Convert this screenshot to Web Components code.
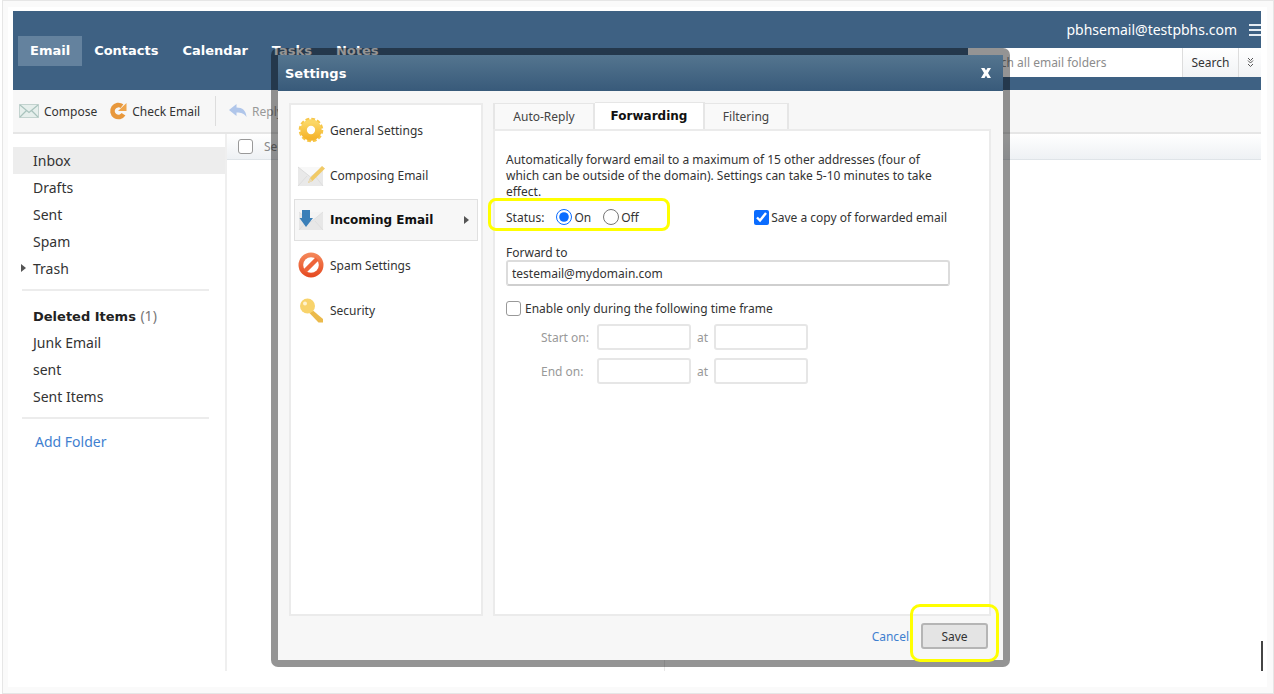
<!DOCTYPE html>
<html lang="en">
<head>
<meta charset="utf-8">
<title>Email - Settings</title>
<style>
html,body{margin:0;height:100%}
body{--bold-font:"DejaVu Sans",Verdana,sans-serif;font-family:"Noto Sans","Open Sans",sans-serif;font-size:12px;color:#333;background:#fff}
</style>
</head>
<body>
<mail-app></mail-app>
<script>
const define = (name, markup, setup) => {
  const template = document.createElement('template');
  template.innerHTML = markup;
  customElements.define(name, class extends HTMLElement {
    constructor() {
      super();
      this.attachShadow({ mode: 'open' }).appendChild(template.content.cloneNode(true));
    }
    connectedCallback() { if (setup) setup(this, this.shadowRoot); }
  });
};

/* Line and colour icons */
const ICONS = {
  compose: `<svg viewBox="0 0 20 16" width="20" height="16"><rect x=".5" y="1.5" width="19" height="13" fill="#e6efec" stroke="#c3d3cf"/><path d="M1 2l9 7.500L19 2M1 14l6.500-6.500M19 14l-6.500-6.500" fill="none" stroke="#a9c3bd" stroke-width="1.200"/></svg>`,
  refresh: `<svg viewBox="0 0 18 18" width="18" height="18"><path d="M14.500 12.300A6 6 0 1 1 13 4.200" fill="none" stroke="#e8983c" stroke-width="4.600"/><path d="M17.500 1v8h-8.500z" fill="#efa54c"/></svg>`,
  reply: `<svg viewBox="0 0 18 14" width="18" height="14"><path d="M0 6L7.500 0v3.500c6 0 9.500 3 10 9.500-2.500-3.500-5-4.500-10-4.500V12z" fill="#b0c6ea"/></svg>`,
  gear: `<svg viewBox="0 0 26 26" width="26" height="26"><defs><linearGradient id="g" x2="0" y2="1"><stop stop-color="#fbd766"/><stop offset="1" stop-color="#f5b52e"/></linearGradient></defs><circle cx="13" cy="13" r="10.800" fill="none" stroke="#f7c648" stroke-width="3" stroke-dasharray="3.650 2"/><circle cx="13" cy="13" r="7.400" fill="none" stroke="url(#g)" stroke-width="6.500"/></svg>`,
  pencil: `<svg viewBox="0 0 28 24" width="28" height="24"><rect x="1" y="4" width="25" height="19" fill="#e9e9e9"/><path d="M1 4l12.500 10L26 4" fill="#f8f8f8" stroke="#dcdcdc"/><path d="M1 23l9-10M26 23l-8-10" stroke="#dedede" fill="none"/><path d="M11 20l2-5L25 3l3 2.500L15.500 18z" fill="#f1ca66"/><path d="M11 20l2-5 2.500 3z" fill="#e6d9bb"/></svg>`,
  incoming: `<svg viewBox="0 0 26 22" width="26" height="22"><rect x="1" y="3" width="24" height="18" fill="#e7e7e7"/><path d="M1 3l12 10L25 3" fill="#f4f4f4" stroke="#e0e0e0"/><path d="M1 21l8-9M25 21l-8-9" stroke="#dedede"/><path d="M4 1h8v8h3L8 18 1.500 9H4z" fill="#3a7fb8"/></svg>`,
  spam: `<svg viewBox="0 0 26 26" width="26" height="26"><defs><linearGradient id="r" x2="0" y2="1"><stop stop-color="#f58a5c"/><stop offset="1" stop-color="#e5481f"/></linearGradient></defs><circle cx="13" cy="13" r="12.500" fill="url(#r)"/><circle cx="13" cy="13" r="7.800" fill="#fff"/><path d="M7 19L19 7" stroke="#ee6439" stroke-width="4.500"/></svg>`,
  key: `<svg viewBox="0 0 26 26" width="26" height="26"><path d="M12 11l13 11v3.500h-4.500L9.500 14z" fill="#ebba4b"/><circle cx="9.500" cy="9" r="7.500" fill="#f8d36b"/><circle cx="7" cy="6.500" r="2" fill="#fff3cf"/></svg>`
};
define('ui-icon', `<style>:host{display:flex;align-items:center;justify-content:center;flex:none}svg{display:block}</style>`,
  (el, root) => { root.innerHTML += ICONS[el.getAttribute('name')]; });

/* Top navigation link */
define('nav-link', `<style>
:host{display:block}
a{display:flex;align-items:center;height:30px;padding:0 12px;color:#fff;text-decoration:none;font-family:var(--bold-font);font-weight:700;font-size:13px}
:host([current]) a{background:#64829e}
</style><a href="#"><slot></slot></a>`);

define('search-box', `<style>
:host{display:flex;height:29px;width:293px;background:#fff}
input{flex:1;min-width:0;border:0;padding:0 8px;font:inherit;font-size:12px;background:#fff;outline:0}
input::placeholder{color:#8c8c8c;opacity:1}
button{border:0;border-left:1px solid #ddd;padding:0;background:linear-gradient(#fff,#f1f3f5);font:inherit;font-size:12px;color:#333}
.go{width:56px}.more{width:23px;display:flex;align-items:center;justify-content:center}
</style>
<input type="search" aria-label="Search email" placeholder="Search all email folders"><button class="go">Search</button><button class="more" aria-label="Search options"><svg width="7" height="11" viewBox="0 0 7 11" fill="none" stroke="#555"><path d="M1 1l2.500 2.500L6 1M1 3.500L3.500 6 6 3.500M1 7l2.500 2.500L6 7"/></svg></button>`);

define('mail-header', `<style>
:host{display:flex;justify-content:space-between;height:79px;background:#3e6183;color:#fff;overflow:hidden}
nav{display:flex;align-items:center;padding-left:5px}
.side{display:flex;flex-direction:column;align-items:flex-end}
.account{display:flex;align-items:center;height:37px;gap:12px;font-size:14px}
.menu{border:0;background:none;padding:0;width:12px;height:14px;display:block}
svg{display:block}
</style>
<nav><nav-link current>Email</nav-link><nav-link>Contacts</nav-link><nav-link>Calendar</nav-link><nav-link>Tasks</nav-link><nav-link>Notes</nav-link></nav>
<div class="side"><div class="account"><span>pbhsemail@testpbhs.com</span><button class="menu" aria-label="Menu"><svg width="12" height="14" viewBox="0 0 12 14" stroke="#e6edf3" stroke-width="2"><path d="M0 2h12M0 7h12M0 12h12"/></svg></button></div><search-box></search-box></div>`);

define('tool-button', `<style>
:host{display:block}
button{display:flex;align-items:center;gap:5px;border:0;padding:0;background:none;font:inherit;color:#333}
:host([faded]) button{color:#999}
</style><button><slot></slot></button>`);

define('mail-toolbar', `<style>
:host{display:flex;align-items:center;gap:12px;height:44px;padding-left:6px;background:#f7f7f7;border-bottom:2px solid #e6e6e6;box-sizing:border-box}
.rule{width:1px;height:30px;margin:0 1px 0 3px;background:#ddd}
</style>
<tool-button><ui-icon name="compose"></ui-icon>Compose</tool-button><tool-button><ui-icon name="refresh"></ui-icon>Check Email</tool-button><span class="rule"></span><tool-button faded><ui-icon name="reply"></ui-icon>Reply</tool-button>`);

define('folder-item', `<style>
:host{display:block;position:relative}
a{display:block;height:27px;line-height:27px;padding-left:20px;color:#333;text-decoration:none;font-size:14px}
:host([current]) a{background:#ededed}
:host([unread]) a{font-family:var(--bold-font);font-weight:700;font-size:13px;color:#222}
::slotted(span){font-family:"Noto Sans","Open Sans",sans-serif;font-size:14px;font-weight:400;color:#777}
svg{display:none;position:absolute;left:8px;top:9px}
:host([nested]) svg{display:block}
</style><svg width="5" height="8" viewBox="0 0 5 8"><path d="M0 0l5 4-5 4z" fill="#555"/></svg><a href="#"><slot></slot></a>`);

define('folder-list', `<style>
:host{display:block;width:214px;flex:none;border-right:2px solid #efefef;padding-top:13px;box-sizing:border-box}
hr{border:0;border-top:2px solid #ececec;margin:7px 16px 11px 9px}
.add{display:block;padding:2px 22px;color:#3f7fd0;text-decoration:none;font-size:14px}
</style>
<folder-item current>Inbox</folder-item><folder-item>Drafts</folder-item><folder-item>Sent</folder-item><folder-item>Spam</folder-item><folder-item nested>Trash</folder-item>
<hr><folder-item unread>Deleted Items <span>(1)</span></folder-item><folder-item>Junk Email</folder-item><folder-item>sent</folder-item><folder-item>Sent Items</folder-item><hr><a class="add" href="#">Add Folder</a>`);

define('message-list', `<style>
:host{display:flex;flex-direction:column;flex:1;min-width:0}
header{display:flex}
label{display:flex;align-items:center;width:100%;gap:11px;height:26px;padding-left:11px;background:linear-gradient(#fff,#eef1f4);border-bottom:1px solid #dfe4e8;color:#888;box-sizing:border-box}
input{appearance:none;margin:0;width:15px;height:15px;border:1px solid #999;border-radius:3px;background:#fff}
.panes{display:grid;grid-template-columns:438px 1fr;flex:1}
.panes span{border-right:1px solid #e8e8e8}
.panes span+span{border:0}
</style><header><label><input type="checkbox">Sender</label></header><div class="panes"><span></span><span></span></div>`);

define('settings-link', `<style>
:host{display:block}
a{display:grid;grid-template-columns:28px 1fr auto;align-items:center;gap:5px;height:40px;border:1px solid transparent;padding:0 8px 0 2px;color:#333;text-decoration:none;font-size:12px}
svg{display:none}
:host([current]) a{background:#f7f7f7;border-color:#e0e0e0;font-family:var(--bold-font);font-weight:700;color:#111}
:host([current]) svg{display:block}
</style><a href="#"><slot name="icon"></slot><span><slot></slot></span><svg width="5" height="8" viewBox="0 0 5 8"><path d="M0 0l5 4-5 4z" fill="#555"/></svg></a>`);

define('settings-menu', `<style>
:host{display:flex;flex-direction:column;gap:3px;width:194px;flex:none;box-sizing:border-box;border:2px solid #ebebeb;background:#fff;padding:4px 3px}
</style>
<settings-link><ui-icon slot="icon" name="gear"></ui-icon>General Settings</settings-link>
<settings-link><ui-icon slot="icon" name="pencil"></ui-icon>Composing Email</settings-link>
<settings-link current><ui-icon slot="icon" name="incoming"></ui-icon>Incoming Email</settings-link>
<settings-link><ui-icon slot="icon" name="spam"></ui-icon>Spam Settings</settings-link>
<settings-link><ui-icon slot="icon" name="key"></ui-icon>Security</settings-link>`);

define('highlight-ring', `<style>
:host{display:block;position:relative}
i{position:absolute;inset:var(--ring-inset);border:3px solid #ff0;border-radius:var(--ring-radius,8px);pointer-events:none}
</style><slot></slot><i></i>`);

define('forwarding-panel', `<style>
:host{display:flex;flex-direction:column;flex:1;min-width:0}
.tabs{display:flex;align-items:flex-end;height:26px}
.tabs button{box-sizing:border-box;height:26px;border:1px solid #e6e6e6;border-width:1px 2px 0 0;background:#f9f9f9;font:inherit;color:#444;padding:0;width:84px}
.tabs button:first-child{width:102px;border-left-width:2px}
.tabs .on{width:110px;font-family:var(--bold-font);font-weight:700;color:#111;background:#fff;height:29px;margin-bottom:-2px;padding-bottom:3px}
.panel{flex:1;border:2px solid #ebebeb;background:#fff;padding:21px 39px 0 11px}
p{margin:0;line-height:16px}
.row{display:flex;align-items:center;justify-content:space-between;margin-top:7px;height:20px;padding-right:3px}
.status{display:flex;align-items:center;gap:12px}
label{display:flex;align-items:center;gap:2px}
input{font:inherit;color:#333;box-sizing:border-box}
input[type=radio]{width:16px;height:16px;margin:0;accent-color:#0a6cff}
input[type=checkbox]{width:15px;height:15px;margin:0;accent-color:#0a6cff}
.frame input[type=checkbox]{appearance:none;border:1px solid #999;border-radius:3px;background:#fff}
.field{display:block;margin-top:19px;line-height:14px}
input[type=text]{border:2px solid #dcdcdc;border-bottom-color:#cfcfcf;border-radius:3px;padding:0 4px;height:26px;background:#fff}
.to{width:100%;display:block}
.frame{margin-top:13px;gap:4px;height:18px}
.times{display:grid;grid-template-columns:50px 94px 11px 94px;gap:8px 6px;align-items:center;margin:7px 0 0 35px;color:#999}
.times input[type=text]{width:94px;border-color:#e6e6e6}
highlight-ring{--ring-inset:-11px -31px -5px -18px}
</style>
<div class="tabs" role="tablist"><button role="tab">Auto-Reply</button><button role="tab" class="on" aria-selected="true">Forwarding</button><button role="tab">Filtering</button></div>
<div class="panel">
<p>Automatically forward email to a maximum of 15 other addresses (four of which can be outside of the domain). Settings can take 5-10 minutes to take effect.</p>
<div class="row"><highlight-ring><div class="status"><span>Status:</span><label><input type="radio" name="status" checked>On</label><label><input type="radio" name="status">Off</label></div></highlight-ring><label><input type="checkbox" checked>Save a copy of forwarded email</label></div>
<label class="field" for="to">Forward to</label><input class="to" id="to" type="text" value="testemail@mydomain.com">
<label class="frame"><input type="checkbox">Enable only during the following time frame</label>
<div class="times"><label for="sd">Start on:</label><input id="sd" type="text" disabled><label for="st">at</label><input id="st" type="text" disabled><label for="ed">End on:</label><input id="ed" type="text" disabled><label for="et">at</label><input id="et" type="text" disabled></div>
</div>`);

define('settings-dialog', `<style>
:host{position:absolute;left:258px;right:251px;top:37px;bottom:4px;display:flex;flex-direction:column;box-sizing:border-box;border:7px solid rgba(0,0,0,.42);border-radius:7px;background:#f7f7f7;background-clip:padding-box}
header{display:flex;align-items:center;justify-content:space-between;height:36px;flex:none;padding:0 11px 0 7px;background:linear-gradient(#54758f,#385a7a);color:#fff}
h2{margin:0;font-family:var(--bold-font);font-size:13px;font-weight:700}
.close{border:0;background:none;padding:0;width:12px;height:12px}
svg{display:block}
.body{display:flex;flex:1;gap:10px;padding:12px 12px 0 11px}
footer{display:flex;align-items:center;justify-content:flex-end;gap:12px;height:44px;flex:none;padding-right:15px;box-sizing:border-box;padding-bottom:4px}
footer a{color:#3f7fd0;text-decoration:none}
.save{display:block;width:67px;height:26px;border:2px solid #b5b5b5;border-radius:3px;background:#e4e4e4;font:inherit;color:#333;padding:0}
highlight-ring{--ring-inset:-19px -11px -13px -11px;--ring-radius:10px}
</style>
<header><h2>Settings</h2><button class="close" aria-label="Close"><svg width="12" height="12" viewBox="0 0 12 12"><path d="M1 1h3.500L6 3.500 7.500 1H11L8 6l3 5H7.500L6 8.500 4.500 11H1l3-5z" fill="#fff"/></svg></button></header>
<div class="body"><settings-menu></settings-menu><forwarding-panel></forwarding-panel></div>
<footer><a href="#">Cancel</a><highlight-ring><button class="save">Save</button></highlight-ring></footer>`);

define('mail-app', `<style>
:host{display:flex;min-height:100vh;box-sizing:border-box;padding:0 0 0 2px}
.frame{flex:1;display:flex;box-sizing:border-box;border:1px solid #e6e6e6;background:#fafafa;padding:6px 6px 6px 5px}
.sheet{flex:1;display:flex;background:#fff;padding:4px 6px 16px 5px;position:relative}
.app{flex:1;display:flex;flex-direction:column;position:relative;min-width:0}
.main{display:flex;flex:1}
.caret{position:absolute;right:4px;bottom:16px;width:2px;height:30px;background:#444}
</style>
<div class="frame"><div class="sheet"><div class="app"><mail-header></mail-header><mail-toolbar></mail-toolbar><div class="main"><folder-list></folder-list><message-list></message-list></div><settings-dialog role="dialog" aria-label="Settings"></settings-dialog></div><span class="caret"></span></div></div>`);
</script>
</body>
</html>
